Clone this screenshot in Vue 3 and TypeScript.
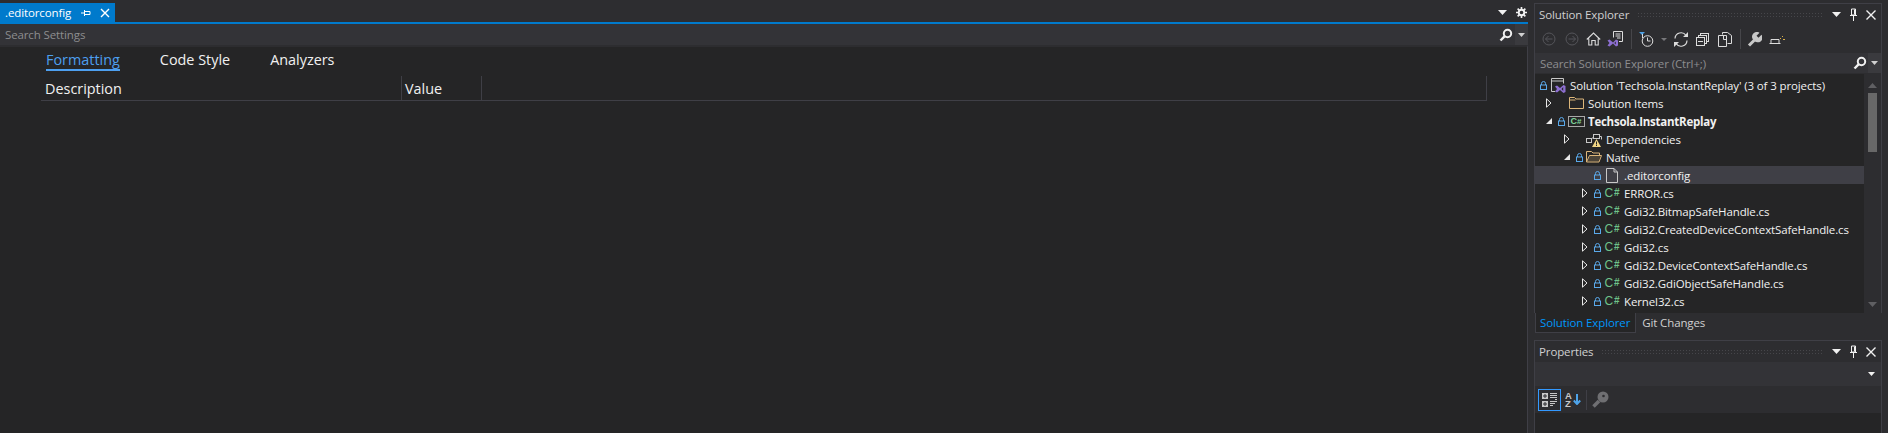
<script setup lang="ts">
type Row = { depth: number; arrow?: 'open' | 'closed'; lock?: boolean; icon: string; label: string; bold?: boolean; selected?: boolean }
const rows: Row[] = [
  { depth: 0, lock: true, icon: 'sln', label: "Solution 'Techsola.InstantReplay' (3 of 3 projects)" },
  { depth: 1, arrow: 'closed', icon: 'folder', label: 'Solution Items' },
  { depth: 1, arrow: 'open', lock: true, icon: 'proj', label: 'Techsola.InstantReplay', bold: true },
  { depth: 2, arrow: 'closed', icon: 'deps', label: 'Dependencies' },
  { depth: 2, arrow: 'open', lock: true, icon: 'openfolder', label: 'Native' },
  { depth: 3, lock: true, icon: 'file', label: '.editorconfig', selected: true },
  { depth: 3, arrow: 'closed', lock: true, icon: 'cs', label: 'ERROR.cs' },
  { depth: 3, arrow: 'closed', lock: true, icon: 'cs', label: 'Gdi32.BitmapSafeHandle.cs' },
  { depth: 3, arrow: 'closed', lock: true, icon: 'cs', label: 'Gdi32.CreatedDeviceContextSafeHandle.cs' },
  { depth: 3, arrow: 'closed', lock: true, icon: 'cs', label: 'Gdi32.cs' },
  { depth: 3, arrow: 'closed', lock: true, icon: 'cs', label: 'Gdi32.DeviceContextSafeHandle.cs' },
  { depth: 3, arrow: 'closed', lock: true, icon: 'cs', label: 'Gdi32.GdiObjectSafeHandle.cs' },
  { depth: 3, arrow: 'closed', lock: true, icon: 'cs', label: 'Kernel32.cs' },
]
function indent(r: Row): string {
  return (r.arrow ? 18 * (r.depth - 1) + 7 : 18 * r.depth + 3) + 'px'
}
</script>

<template>
  <div class="ide">
    <section class="doc">
      <div class="tabwell">
        <div class="doctab">
          <span class="doctab-name">.editorconfig</span>
          <svg width="10" height="10" viewBox="0 0 10 10"><path d="M0 5h3M3.500 2v6M3.500 3.500h5.500v3H3.500" fill="none" stroke="#fff"/></svg>
          <svg class="x" width="10" height="10" viewBox="0 0 10 10"><path d="M1 1l8 8M9 1l-8 8" stroke="#fff" stroke-width="1.400"/></svg>
        </div>
        <div class="spacer"></div>
        <svg class="tri" width="9" height="5" viewBox="0 0 9 5"><path d="M0 0h9L4.500 5z" fill="#f1f1f1"/></svg>
        <svg class="gear" width="11" height="11" viewBox="0 0 12 12"><circle cx="6" cy="6" r="3" fill="none" stroke="#f1f1f1" stroke-width="2"/><path d="M6 0v2.500M6 9.500V12M0 6h2.500M9.500 6H12M1.800 1.800l1.800 1.800M8.400 8.400l1.800 1.800M1.800 10.200l1.800-1.800M8.400 3.600l1.800-1.800" stroke="#f1f1f1" stroke-width="1.800"/></svg>
      </div>
      <div class="docsearch">
        <span class="placeholder">Search Settings</span>
        <div class="spacer"></div>
        <svg class="mag docmag" width="14" height="14" viewBox="0 0 14 14"><circle cx="8.500" cy="5.500" r="3.700" fill="none" stroke="#f1f1f1" stroke-width="2"/><path d="M5.800 8.200L1.500 12.500" stroke="#f1f1f1" stroke-width="2.400"/></svg>
        <span class="caretbox"><svg width="7" height="4" viewBox="0 0 7 4"><path d="M0 0h7L3.500 4z" fill="#d0d0d0"/></svg></span>
      </div>
      <div class="docbody">
        <div class="cfgtabs">
          <span class="cfgtab active">Formatting</span>
          <span class="cfgtab">Code Style</span>
          <span class="cfgtab">Analyzers</span>
        </div>
        <div class="cfghead">
          <div class="col-desc">Description</div>
          <div class="col-val">Value</div>
          <div class="col-rest"></div>
        </div>
      </div>
    </section>

    <aside class="side">
      <div class="panel se">
        <div class="title">
          <span>Solution Explorer</span>
          <div class="grip"></div>
          <svg width="9" height="5" viewBox="0 0 9 5"><path d="M0 0h9L4.500 5z" fill="#f1f1f1"/></svg>
          <svg width="9" height="13" viewBox="0 0 9 13"><path d="M2.500 1h4v6h-4zM1 7.500h7M4.500 8v5M5.500 1.500v5" fill="none" stroke="#f1f1f1"/></svg>
          <svg width="10" height="10" viewBox="0 0 10 10"><path d="M.5.500l9 9M9.500.500l-9 9" stroke="#f1f1f1" stroke-width="1.400"/></svg>
        </div>
        <div class="toolbar">
          <svg class="a" width="14" height="14" viewBox="0 0 14 14"><g fill="none" stroke="#55555a"><circle cx="7" cy="7" r="6"/><path d="M10.500 7h-7M6.500 4l-3 3 3 3"/></g></svg>
          <svg class="b" width="14" height="14" viewBox="0 0 14 14"><g fill="none" stroke="#55555a"><circle cx="7" cy="7" r="6"/><path d="M3.500 7h7M7.500 4l3 3-3 3"/></g></svg>
          <svg class="c" width="15" height="14" viewBox="0 0 15 14"><path d="M.8 7.500L7.500 1l6.700 6.500M2.800 6.500V13h3V8.500h3.400V13h3V6.500" fill="none" stroke="#dcdcdc" stroke-width="1.100"/></svg>
          <svg class="d" width="16" height="16" viewBox="0 0 16 16"><path d="M6.500 6.500V.5h9v10H12" fill="none" stroke="#dcdcdc"/><path d="M8.500 3h5M8.500 5h5M10 7h3.500" stroke="#dcdcdc"/><path d="M.5 9.500L2.500 8.500 6 11.500 9 8.500l2 1v5l-2 1-3-3-3.500 3-2-1 2-2.500z" fill="#8d6fd1"/><path d="M8.800 10.500v3L7.300 12z" fill="#2d2d30"/></svg>
          <i class="tbsep s1"></i>
          <svg class="e" width="15" height="15" viewBox="0 0 15 15"><path d="M0 0h6L3 3z" fill="#4ea3e8"/><circle cx="8.500" cy="9" r="5.300" fill="none" stroke="#dcdcdc"/><path d="M8.500 5.500V9H11.500" fill="none" stroke="#dcdcdc"/><path d="M3.500 2v4" stroke="#dcdcdc"/></svg>
          <svg class="f" width="6" height="3" viewBox="0 0 6 3"><path d="M0 0h6L3 3z" fill="#77777a"/></svg>
          <svg class="g" width="16" height="15" viewBox="0 0 16 15"><path d="M2 6.500A6 6 0 0 1 13 3.500M14 8.500A6 6 0 0 1 3 11.500" fill="none" stroke="#dcdcdc" stroke-width="1.200"/><path d="M15 0v5h-5zM1 15v-5h5z" fill="#dcdcdc"/></svg>
          <svg class="h" width="13" height="13" viewBox="0 0 13 13"><g fill="#2d2d30" stroke="#dcdcdc"><rect x="4.500" y=".5" width="8" height="8"/><rect x="2.500" y="2.500" width="8" height="8"/><rect x=".5" y="4.500" width="8" height="8"/></g><path d="M2 8.500h5" stroke="#dcdcdc"/></svg>
          <svg class="i" width="14" height="15" viewBox="0 0 14 15"><path d="M4.500 2.500V.5h5l4 3v8h-4" fill="none" stroke="#dcdcdc"/><path d="M.5 3.500h8v11h-8z" fill="#2d2d30" stroke="#dcdcdc"/><path d="M5.500 3.500v4h3.500" fill="none" stroke="#dcdcdc"/></svg>
          <i class="tbsep s2"></i>
          <svg class="j" width="15" height="15" viewBox="0 0 15 15"><path d="M2 13.500L7.500 8" stroke="#c8c8c8" stroke-width="3"/><path d="M7 8.500A4.500 4.500 0 0 1 12.500.8L9.500 3.800 11.500 5.800 14.500 2.800A4.500 4.500 0 0 1 7 8.500z" fill="#c8c8c8"/></svg>
          <svg class="k" width="16" height="9" viewBox="0 0 16 9"><path d="M.5 8.500h11M2 4.500h8v4M2 4.500v4" fill="none" stroke="#dcdcdc"/><path d="M11 3h1v1h-1zM13 1h1v1h-1zM14 4h2v1h-2z" fill="#d8b04a"/></svg>
        </div>
        <div class="sesearch">
          <span class="placeholder">Search Solution Explorer (Ctrl+;)</span>
          <div class="spacer"></div>
          <svg class="mag" width="14" height="14" viewBox="0 0 14 14"><circle cx="8.500" cy="5.500" r="3.700" fill="none" stroke="#f1f1f1" stroke-width="2"/><path d="M5.800 8.200L1.500 12.500" stroke="#f1f1f1" stroke-width="2.400"/></svg>
          <span class="caretbox"><svg width="7" height="4" viewBox="0 0 7 4"><path d="M0 0h7L3.500 4z" fill="#d0d0d0"/></svg></span>
        </div>
        <div class="treewrap">
          <div class="tree">
            <div v-for="r in rows" :key="r.label" class="row" :class="{ sel: r.selected }" :style="{ paddingLeft: indent(r) }">
              <span v-if="r.arrow" class="arrow">
                <svg v-if="r.arrow === 'closed'" width="6" height="10" viewBox="0 0 6 10"><path d="M.5.800L5 5 .5 9.200z" fill="none" stroke="#e8e8e8"/></svg>
                <svg v-else width="6" height="6" viewBox="0 0 6 6"><path d="M6 0v6H0z" fill="#e8e8e8"/></svg>
              </span>
              <span class="lock">
                <svg v-if="r.lock" width="7" height="9" viewBox="0 0 7 9"><path d="M1.500 4V2.500a2 2 0 0 1 4 0V4" fill="none" stroke="#5aa9ea"/><rect x=".5" y="4" width="6" height="4.500" fill="none" stroke="#5aa9ea"/></svg>
              </span>
              <span class="ico">
                <svg v-if="r.icon === 'sln'" width="16" height="16" viewBox="0 0 16 16"><path d="M1.500 14.500v-13h12v5M1.500 4h12M5 14.500H1.500" fill="none" stroke="#c8c8c8"/><path d="M5 9.500l2-1 3 2.500 3.500-3 2 1v6l-2 1-3.500-3-3 2.500-2-1 2-2.500z" fill="#8d6fd1"/><path d="M13.200 10v4L11.500 12z" fill="#252526"/></svg>
                <svg v-else-if="r.icon === 'folder'" width="15" height="12" viewBox="0 0 15 12"><path d="M.5 11.500V.5h5L7 2h7.500v9.500zM.5 3h6" fill="none" stroke="#dcb67a"/></svg>
                <svg v-else-if="r.icon === 'openfolder'" width="16" height="12" viewBox="0 0 16 12"><path d="M.5 11V.5h5L7 2h6.500v2.500M.5 11l3-6.500H15.500L13 11z" fill="none" stroke="#dcb67a"/><path d="M1.500 10.500l2.500-5.500h10.500L12.500 10.500z" fill="#dcb67a" fill-opacity=".22"/></svg>
                <span v-else-if="r.icon === 'proj'" class="projbox">C<b>#</b></span>
                <svg v-else-if="r.icon === 'deps'" width="16" height="16" viewBox="0 0 16 16"><g fill="none" stroke="#c8c8c8"><rect x=".5" y="7.500" width="5" height="4"/><rect x="7.500" y="3.500" width="6" height="4"/><path d="M5.500 8l2-2M13.500 5.500h2v3"/></g><path d="M6 16l4.500-8 4.500 8z" fill="#f0d584"/><path d="M10.500 10.500v3M10.500 14v1" stroke="#222"/></svg>
                <svg v-else-if="r.icon === 'file'" width="12" height="15" viewBox="0 0 12 15"><path d="M.5.500h7.500l3.500 3.500v10.500H.5zM8 .5V4h3.500" fill="none" stroke="#c8c8c8"/></svg>
                <span v-else class="cs">C<b>#</b></span>
              </span>
              <span class="lbl" :class="{ bold: r.bold }">{{ r.label }}</span>
            </div>
          </div>
          <div class="scroll">
            <svg width="9" height="5" viewBox="0 0 9 5"><path d="M4.500 0L9 5H0z" fill="#5f5f62"/></svg>
            <div class="thumb"></div>
            <div class="spacer"></div>
            <svg width="9" height="5" viewBox="0 0 9 5"><path d="M0 0h9L4.500 5z" fill="#5f5f62"/></svg>
          </div>
        </div>
      </div>
      <div class="setabs">
        <span class="setab on">Solution Explorer</span>
        <span class="setab">Git Changes</span>
      </div>
      <div class="panel props">
        <div class="title">
          <span>Properties</span>
          <div class="grip"></div>
          <svg width="9" height="5" viewBox="0 0 9 5"><path d="M0 0h9L4.500 5z" fill="#f1f1f1"/></svg>
          <svg width="9" height="13" viewBox="0 0 9 13"><path d="M2.500 1h4v6h-4zM1 7.500h7M4.500 8v5M5.500 1.500v5" fill="none" stroke="#f1f1f1"/></svg>
          <svg width="10" height="10" viewBox="0 0 10 10"><path d="M.5.500l9 9M9.500.500l-9 9" stroke="#f1f1f1" stroke-width="1.400"/></svg>
        </div>
        <div class="combo">
          <svg width="7" height="4" viewBox="0 0 7 4"><path d="M0 0h7L3.500 4z" fill="#f1f1f1"/></svg>
        </div>
        <div class="ptools">
          <span class="pbtn">
            <svg width="15" height="14" viewBox="0 0 15 14"><path d="M0 0h6v6H0zM0 8h6v6H0z" fill="#c8c8c8"/><path d="M1 3h4M3 1v4M1 11h4M3 9v4" stroke="#2d2d30"/><path d="M8 .5h7M8 2.500h7M8 4.500h7M13 6.500h2M8 8.500h7M8 10.500h5M8 12.500h3" stroke="#c8c8c8"/></svg>
          </span>
          <span class="az"><span class="azt">A<br>Z</span>
            <svg width="8" height="11" viewBox="0 0 8 11"><path d="M4 0v10M.8 6.500L4 10l3.200-3.500" fill="none" stroke="#4ea3e8" stroke-width="2"/></svg>
          </span>
          <i class="psep"></i>
          <svg width="17" height="18" viewBox="0 0 17 18"><circle cx="11" cy="6" r="5.500" fill="#6f6f72"/><circle cx="11.500" cy="5" r="1.300" fill="#2d2d30"/><path d="M7 10L1.500 15.500" stroke="#6f6f72" stroke-width="3.600"/></svg>
        </div>
        <div class="pbody"></div>
      </div>
    </aside>
  </div>
</template>

<style>
html, body { margin: 0; background: #2d2d30; overflow: hidden; }
</style>

<style scoped>
.ide { display: flex; width: 1888px; height: 433px; background: #2d2d30; color: #f1f1f1; font-family: "Open Sans", "Noto Sans", sans-serif; font-size: 11.5px; letter-spacing: -0.12px; overflow: hidden; }
.spacer { flex: 1; }
svg { display: block; flex: none; }
.doc { width: 1528px; flex: none; display: flex; flex-direction: column; }
.tabwell { height: 19px; margin-top: 3px; display: flex; align-items: center; }
.doctab { width: 115px; height: 19px; background: #007acc; display: flex; align-items: center; color: #fff; box-sizing: border-box; padding-left: 5px; }
.doctab-name { width: 76px; }
.x { margin-left: 9px; }
.tri { margin-right: 9px; }
.gear { margin-right: 1px; }
.docsearch { border-top: 2px solid #007acc; height: 21px; background: #333337; display: flex; align-items: center; padding-left: 5px; }
.placeholder { color: #8d8d8f; }
.mag { margin-right: 1px; }
.docmag { margin-right: 2px; }
.caretbox { width: 13px; align-self: stretch; background: #3a3a3e; display: flex; align-items: center; justify-content: center; }
.docbody { flex: 1; background: #252526; border-top: 2px solid #2d2d30; border-right: 1px solid #3f3f46; padding-left: 41px; }
.cfgtabs { display: flex; height: 29px; padding-left: 5px; gap: 40px; align-items: flex-start; font-size: 14.4px; letter-spacing: 0; }
.cfgtab { height: 24px; padding-top: 3px; line-height: 20px; color: #f1f1f1; box-sizing: border-box; }
.cfgtab.active { color: #4d9fef; border-bottom: 2px solid #4d9fef; }
.cfghead { width: 1446px; height: 24px; display: flex; border-bottom: 1px solid #3f3f46; font-size: 14.4px; letter-spacing: 0; line-height: 26px; }
.col-desc { width: 361px; padding-left: 4px; box-sizing: border-box; border-right: 1px solid #3f3f46; }
.col-val { width: 80px; padding-left: 3px; box-sizing: border-box; border-right: 1px solid #3f3f46; }
.col-rest { flex: 1; border-right: 1px solid #3f3f46; }
.side { width: 348px; margin-left: 6px; display: flex; flex-direction: column; }
.panel { border: 1px solid #3f3f46; border-bottom: 0; display: flex; flex-direction: column; box-sizing: border-box; }
.se { margin-top: 3px; height: 310px; }
.title { height: 21px; flex: none; display: flex; align-items: center; padding: 0 5px 0 4px; color: #d0d0d0; gap: 8px; }
.grip { flex: 1; height: 5px; background-image: radial-gradient(circle, #46464a 1px, transparent 1px); background-size: 3px 3px; }
.toolbar { height: 28px; flex: none; display: flex; align-items: center; }
.a { margin-left: 7px; } .b { margin-left: 9px; } .c { margin-left: 7px; } .d { margin-left: 6px; }
.e { margin-left: 7px; } .f { margin-left: 7px; } .g { margin-left: 6px; } .h { margin-left: 7px; }
.i { margin-left: 9px; } .j { margin-left: 6px; } .k { margin-left: 7px; }
.tbsep { height: 20px; width: 1px; background: #46464a; margin-left: 8px; }
.sesearch { height: 20px; flex: none; background: #333337; display: flex; align-items: center; padding-left: 5px; }
.treewrap { flex: 1; display: flex; min-height: 0; background: #252526; border-top: 1px solid #2d2d30; }
.tree { flex: 1; padding-top: 2px; overflow: hidden; }
.row { height: 18px; display: flex; align-items: center; white-space: nowrap; box-sizing: border-box; }
.row.sel { background: #3f3f46; }
.arrow { width: 10px; margin-right: 4px; display: flex; justify-content: flex-end; align-items: center; flex: none; }
.lock { width: 10px; height: 18px; display: flex; justify-content: center; align-items: center; flex: none; margin-right: 2px; }
.ico { width: 16px; display: flex; justify-content: center; align-items: center; flex: none; margin-right: 4px; }
.cs { color: #6fc28a; font-size: 12px; letter-spacing: 0; font-family: "Liberation Sans", sans-serif; line-height: 12px; }
.cs b { font-weight: 700; font-size: 10px; vertical-align: 1px; margin-left: 1px; }
.projbox { width: 17px; height: 11px; flex: none; box-sizing: border-box; border: 1px solid #a8a8a8; color: #7fd49b; font: 700 9px/9px "Liberation Sans", sans-serif; letter-spacing: 0; text-align: center; }
.projbox b { font-size: 8px; }
.bold { font-weight: 700; letter-spacing: -0.25px; }
.lbl { color: #f1f1f1; }
.scroll { width: 17px; flex: none; background: #2d2d30; display: flex; flex-direction: column; align-items: center; padding: 9px 0 6px; box-sizing: border-box; }
.thumb { width: 9px; height: 59px; margin-top: 5px; background: #686868; }
.setabs { height: 20px; flex: none; display: flex; }
.setab { padding: 0 6px; line-height: 20px; color: #d0d0d0; }
.setab.on { color: #0097fb; background: #252526; border: 1px solid #3f3f46; border-top: 0; padding: 0 5px 0 4px; margin-left: 1px; line-height: 19px; }
.props { margin-top: 7px; flex: 1; }
.combo { height: 24px; background: #333337; display: flex; align-items: center; justify-content: flex-end; padding-right: 6px; flex: none; }
.ptools { height: 27px; flex: none; display: flex; align-items: center; padding-left: 3px; }
.pbtn { width: 21px; height: 20px; border: 1px solid #3399ff; display: flex; align-items: center; justify-content: center; }
.az { margin-left: 4px; display: flex; align-items: center; gap: 1px; }
.azt { font: 700 9.5px/8px "Liberation Sans", sans-serif; color: #c8c8c8; letter-spacing: 0; }
.psep { width: 1px; height: 20px; background: #3f3f46; margin: 0 5px 0 5px; }
.pbody { flex: 1; background: #252526; }
</style>
